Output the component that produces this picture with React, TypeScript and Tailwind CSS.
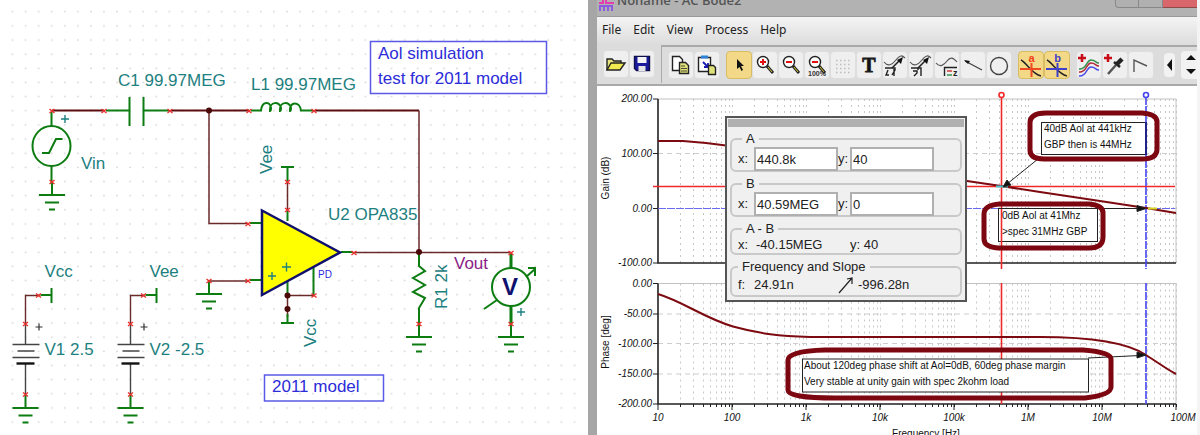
import type { ReactNode } from "react";

interface Point {
  x: number;
  y: number;
}

interface ToolButtonProps {
  label: string;
  active?: boolean;
  children: ReactNode;
}

const MENU = ["File", "Edit", "View", "Process", "Help"];

/* ---------- Schematic ---------- */

function Pin({ x, y }: Point) {
  return <path d={`M${x - 2.5} ${y - 2}l5 4m0 -4l-5 4`} stroke="#e8302c" strokeWidth="1.4" />;
}

function Node({ x, y }: Point) {
  return <circle cx={x} cy={y} r="3" fill="#4a0808" />;
}

function Ground({ x, y }: Point) {
  return (
    <g stroke="#0d7d12" strokeWidth="2">
      <path d={`M${x} ${y - 13}v13M${x - 13} ${y}h26`} />
      <path d={`M${x - 7} ${y + 7.5}h14M${x - 3} ${y + 14.5}h6`} />
    </g>
  );
}

function Battery({ x, supply, value }: { x: number; supply: string; value: string }) {
  return (
    <g fill="none">
      <path d={`M${x} 324V295.5h14`} stroke="#6b2a2a" strokeWidth="1.4" />
      <path d={`M${x + 15} 295h11M${x + 26} 288v15`} stroke="#0d7d12" strokeWidth="2" />
      <path d={`M${x} 325v19M${x} 364v31`} stroke="#444" strokeWidth="1.4" />
      <path d={`M${x - 13} 344.5h27M${x - 8} 351h17M${x - 13} 357.5h27`} stroke="#444" strokeWidth="1.3" />
      <path d={`M${x - 9} 363.5h18`} stroke="#111" strokeWidth="2.4" />
      <path d={`M${x + 10} 327h7m-3.5 -3.5v7`} stroke="#333" strokeWidth="1.2" />
      <Ground x={x} y={408} />
      <Pin x={x + 13} y={295.5} />
      <Pin x={x} y={324} />
      <Pin x={x} y={394.5} />
      <g fill="#1d8080">
        <text x={x + 19} y="277">{supply}</text>
        <text x={x + 19} y="355">{value}</text>
      </g>
    </g>
  );
}

function Schematic() {
  return (
    <svg viewBox="0 0 588 435" className="block w-full font-['Liberation_Sans',sans-serif] text-[17px]">
      <defs>
        <pattern id="dots" width="13.07" height="14.15" patternUnits="userSpaceOnUse" x="6" y="4.7">
          <circle cx="6.5" cy="7" r="0.9" fill="#d6d6d6" />
        </pattern>
      </defs>
      <rect x="6" y="4.7" width="575" height="424" fill="url(#dots)" />

      {/* Wires */}
      <g fill="none" stroke="#5c0d10" strokeWidth="2">
        <path d="M52 110.5h52M171 110.5h78M315 110.5h104" />
        <path d="M209 110.5V223.5h39M419 110.5V252M354 252.5h157M287.5 183v27M209 281h39M287.5 295.5h26M287.5 295v22" stroke="#6b2a2a" strokeWidth="1.5" />
      </g>

      {/* Component bodies */}
      <g fill="none" stroke="#0d7d12" strokeWidth="2">
        <path d="M51.5 112v14M51.5 166v18M42 153h7l7 -14h6.5" />
        <ellipse cx="51.5" cy="146" rx="19" ry="20" />
        <path d="M106 110.5h24M129.5 97v29M143.5 97v29M143 110.5h26" />
        <path d="M251 110.5h10C262 101 270 101 271 108q0 3 -1 3C269 101 280 101 281 108q0 3 -1 3C279 101 290 101 291 108q0 3 -1 3C289 101 300 101 301 110.5h12" />
        <path d="M250 223h12M250 280h12M341 252h12M281 167h13M287.5 167v15M287.5 211v10" />
        <path d="M287.5 280v15M313.5 267v28M281 323h13M287.5 314v9" />
        <path d="M419 254v12l6 5l-12 7l12 7l-12 7l12 6l-6 10v16" />
        <circle cx="511" cy="287" r="19" />
        <path d="M511 254v14M511 306v18" strokeWidth="3" />
        <path d="M484 309l13 -9M526 277l9 -8M528 268h7v8" />
      </g>

      <path d="M262 210.5L340 252.5L262 295Z" fill="#ffff00" stroke="#10106e" strokeWidth="2.5" />
      <g stroke="#1d8080" strokeWidth="1.4">
        <path d="M268 276h8m-4 -4v8M282 267h9m-4.5 -4.5v9M61 119h8m-4 -4v8M517 312h8m-4 -4v8" />
      </g>

      <Ground x={52} y={195} />
      <Ground x={209} y={294} />
      <Ground x={419} y={337} />
      <Ground x={511} y={337} />

      <Node x={209} y={110.5} />
      <Node x={419} y={252} />
      <Node x={287.5} y={295.5} />
      <Node x={287.5} y={309} />

      <Pin x={52} y={111} />
      <Pin x={104} y={111} />
      <Pin x={170} y={111} />
      <Pin x={249} y={111} />
      <Pin x={314} y={111} />
      <Pin x={248} y={224} />
      <Pin x={248} y={281} />
      <Pin x={209} y={281} />
      <Pin x={52} y={182} />
      <Pin x={287.5} y={182} />
      <Pin x={287.5} y={210} />
      <Pin x={314} y={295.5} />
      <Pin x={354} y={253} />
      <Pin x={511} y={253} />
      <Pin x={511} y={324} />
      <Pin x={419} y={324} />

      <Battery x={25.5} supply="Vcc" value="V1 2.5" />
      <Battery x={130.5} supply="Vee" value="V2 -2.5" />

      <g fill="#1d8080">
        <text x="118" y="86">C1 99.97MEG</text>
        <text x="251" y="90">L1 99.97MEG</text>
        <text x="81" y="169">Vin</text>
        <text x="328" y="220">U2 OPA835</text>
        <text transform="translate(272 174) rotate(-90)">Vee</text>
        <text transform="translate(316 347) rotate(-90)">Vcc</text>
        <text transform="translate(447 309) rotate(-90)">R1 2k</text>
      </g>
      <text x="454" y="269" fill="#8a1c86">Vout</text>
      <text x="510" y="295" textAnchor="middle" fill="#10106e" className="text-[24px] font-bold">V</text>
      <text x="318" y="278" fill="#2a2ae0" className="text-[10px]">PD</text>

      {/* Notes */}
      <g fill="none" stroke="#5a5ae6" strokeWidth="1.5">
        <rect x="370.5" y="41.5" width="176" height="52" />
        <rect x="264.5" y="375" width="119" height="26" />
      </g>
      <g fill="#2c2cd8">
        <text x="378" y="59">Aol simulation</text>
        <text x="378" y="84">test for 2011 model</text>
        <text x="272" y="392">2011 model</text>
      </g>
    </svg>
  );
}

/* ---------- Toolbar ---------- */

function ToolButton({ label, active = false, children }: ToolButtonProps) {
  return (
    <button
      type="button"
      aria-label={label}
      className={`h-7 w-[26px] shrink-0 rounded-sm border ${active ? "border-[#d8bd62] bg-[#f3d987]" : "border-[#dedede] bg-[#efefef]"}`}
    >
      <svg viewBox="0 0 24 26" className="block h-full w-full" fill="none" stroke="#222" strokeWidth="1.4">
        {children}
      </svg>
    </button>
  );
}

function Lens({ plus = false }: { plus?: boolean }) {
  return (
    <>
      <circle cx="10" cy="10" r="5.5" fill="#fff" />
      <path d="M14 14l6 7" strokeWidth="3" />
      <path d="M15 15l4 5" stroke="#d8cf3a" strokeWidth="1" />
      <path d={plus ? "M7 10h6M10 7v6" : "M7 10h6"} stroke="#e01010" strokeWidth="2" />
    </>
  );
}

/* Wavy trace with an arrow, shared by the two marker tools */
function MarkedTrace() {
  return (
    <>
      <path d="M1 10c4 5 8 3 12 -2s6 -5 9 -2" stroke="#555" strokeWidth="1.2" />
      <path d="M9 16L17 8" strokeWidth="1.6" />
      <path d="M20 5l-6 3l4 4z" fill="#111" stroke="none" />
    </>
  );
}

function Toolbar() {
  return (
    <div className="flex h-[43px] items-center overflow-hidden border-b-2 border-[#a9a9a9] bg-[#dcdcdc] font-['Liberation_Sans',sans-serif]">
      <div className="flex shrink-0 items-center px-1.5">
        <ToolButton label="Open">
          <path d="M3 19V8h5l2 2h7v3" fill="#e8e27a" />
          <path d="M3 19l4 -7h14l-5 7z" fill="#f0ea50" />
        </ToolButton>
        <ToolButton label="Save">
          <path d="M4.5 5.5h15v14h-13l-2 -2z" fill="#1a1a9c" stroke="#101050" />
          <path d="M7.5 6h9v6h-9z" fill="#f4f4f4" stroke="none" />
          <path d="M8.5 15h7v5h-7z" fill="#e4e4e4" stroke="none" />
        </ToolButton>
      </div>
      <div className="flex h-[38px] min-w-0 grow items-center gap-1.5 border-t-2 border-l border-[#a9a9a9] pl-1.5">
        <div className="flex shrink-0">
          <ToolButton label="Copy">
            <path d="M3.5 4.5h7l3 3v11h-10z" fill="#fff" />
            <path d="M10.5 10.5h6l3 3v8h-9z" fill="#dfe27a" />
            <path d="M12 14h4M12 16.5h6M12 19h6" strokeWidth="0.8" />
          </ToolButton>
          <ToolButton label="Paste">
            <path d="M3.5 5.5h12v14h-12z" fill="#fff" />
            <path d="M6 5h7" stroke="#2c83d8" strokeWidth="3" />
            <path d="M8 10l5 5m0 -4v4h-4" stroke="#1a1ab0" strokeWidth="1.8" />
            <path d="M13.5 13.5h5l2 2v7h-7z" fill="#dfe27a" />
          </ToolButton>
        </div>
        <div className="flex shrink-0">
          <ToolButton label="Select" active>
            <path d="M10 7v10l2.5 -2l2 4l1.5 -1l-2 -4h3z" fill="#111" stroke="none" />
          </ToolButton>
          <ToolButton label="Zoom in"><Lens plus /></ToolButton>
          <ToolButton label="Zoom out"><Lens /></ToolButton>
          <ToolButton label="Zoom 100%">
            <Lens />
            <text x="3" y="24" fill="#333" stroke="none" className="text-[7px] font-bold">100%</text>
          </ToolButton>
          <ToolButton label="Grid">
            <path d="M5 8.5h14M5 12.5h14M5 16.5h14M5 20.5h14" stroke="#bdbdbd" strokeDasharray="1.5 2.5" />
          </ToolButton>
          <ToolButton label="Text">
            <text x="12" y="20" textAnchor="middle" fill="#111" strokeWidth="0.8" className="font-['Liberation_Serif',serif] text-[20px] font-bold">T</text>
          </ToolButton>
          <ToolButton label="Marker">
            <MarkedTrace />
            <path d="M2 16h10v2l-3 5M5 18l-2 5h3M11 17v7" />
          </ToolButton>
          <ToolButton label="Curve label">
            <MarkedTrace />
            <path d="M2 16h10v8M4 19h4v2l-3 3M9 16v2" />
          </ToolButton>
          <ToolButton label="Legend">
            <path d="M1 11c4 5 8 2 11 -2s6 -4 10 1" stroke="#555" strokeWidth="1.2" />
            <path d="M9.5 15v9M9 15.5h13" />
            <path d="M12 19h5" stroke="#c83030" />
            <path d="M12 23h5" stroke="#289048" />
            <text x="18" y="24" fill="#222" stroke="none" className="text-[9px] font-bold">z</text>
          </ToolButton>
          <ToolButton label="Line">
            <path d="M4 9l17 9" stroke="#444" />
            <path d="M3 8l6 1l-2 3z" fill="#111" stroke="none" />
          </ToolButton>
          <ToolButton label="Circle"><circle cx="12" cy="14" r="8.5" stroke="#444" /></ToolButton>
        </div>
        <div className="flex shrink-0">
          <ToolButton label="Cursor a" active>
            <path d="M2 8c6 3 11 14 20 16" />
            <path d="M1 17h21M12.5 11v14" stroke="#f04a20" strokeWidth="2" />
            <text x="12.5" y="10" textAnchor="middle" fill="#f03c18" stroke="none" className="text-[11px] font-bold">a</text>
          </ToolButton>
          <ToolButton label="Cursor b" active>
            <path d="M2 8c6 3 11 14 20 16" />
            <path d="M1 17h21M12.5 11v14" stroke="#4040c8" strokeWidth="2" />
            <text x="12.5" y="10" textAnchor="middle" fill="#4040c8" stroke="none" className="text-[11px] font-bold">b</text>
          </ToolButton>
        </div>
        <div className="flex shrink-0">
          <ToolButton label="Add curves">
            <path d="M1 6h8M5 2v8" stroke="#c80c18" strokeWidth="2.5" />
            <path d="M2 17c8 1 7 -9 12 -9s4 3 8 3" stroke="#31904a" />
            <path d="M2 20c8 1 7 -9 12 -9s4 3 8 3" stroke="#b02838" />
            <path d="M2 24c8 1 7 -9 12 -9s4 3 8 3" stroke="#4a4ae8" />
          </ToolButton>
          <ToolButton label="Pick curve">
            <path d="M1 6h8M5 2v8" stroke="#c80c18" strokeWidth="2.5" />
            <path d="M5 22l8 -9" stroke="#555" strokeWidth="2.5" />
            <path d="M11 10l6 5" strokeWidth="2.5" />
            <path d="M14 12l5 -5" strokeWidth="4.5" />
          </ToolButton>
          <ToolButton label="Angle"><path d="M5 20V8l13 6" stroke="#555" /></ToolButton>
        </div>
        <button type="button" aria-label="Scroll left" className="ml-1 h-6 w-[11px] shrink-0 rounded-sm bg-[#f2f2f2]">
          <svg viewBox="0 0 11 24" className="block h-full w-full"><path d="M8 6v12l-5 -6z" fill="#111" /></svg>
        </button>
        <button type="button" aria-label="More tools" className="h-7 w-5 shrink-0 rounded-sm bg-[#f2f2f2]">
          <svg viewBox="0 0 20 28" className="block h-full w-full"><path d="M5 9h10l-5 -5zM5 18h10l-5 5z" fill="#111" /></svg>
        </button>
      </div>
    </div>
  );
}

/* ---------- Bode plot ---------- */

const DECADES = ["10", "100", "1k", "10k", "100k", "1M", "10M", "100M"];
const GAIN_TICKS = [
  { label: "200.00", y: 99 },
  { label: "100.00", y: 153.5 },
  { label: "0.00", y: 208.5 },
  { label: "-100.00", y: 263 },
];
const PHASE_TICKS = [
  { label: "0.00", y: 283.5 },
  { label: "-50.00", y: 314 },
  { label: "-100.00", y: 343.5 },
  { label: "-150.00", y: 374 },
  { label: "-200.00", y: 404 },
];
const X0 = 658;
const DECADE = 74;

const gridX = DECADES.slice(0, 7).flatMap((_, d) =>
  [2, 3, 4, 5, 6, 7, 8, 9, 10].map((n) => Math.round(X0 + DECADE * (d + Math.log10(n))) + 0.5)
);

function Panel({ ticks }: { ticks: { label: string; y: number }[] }) {
  const top = ticks[0].y;
  const bottom = ticks[ticks.length - 1].y;
  return (
    <g>
      <path d={gridX.map((x) => `M${x} ${top}V${bottom}`).join("")} stroke="#c8c8c8" strokeDasharray="2 4" />
      <path d={ticks.slice(1, -1).map((t) => `M${X0} ${t.y}H1176`).join("")} stroke="#cdcdcd" strokeDasharray="5 4" />
      <path d={`M${X0} ${top}H1176V${bottom}`} fill="none" stroke="#c2c2c2" />
      <path d={`M${X0} ${top}V${bottom}H1176`} fill="none" stroke="#222" strokeWidth="1.6" />
      {ticks.map((t) => (
        <g key={t.label}>
          <path d={`M653 ${t.y}h5`} stroke="#222" />
          <text x="652" y={t.y + 3} textAnchor="end" className="italic">{t.label}</text>
        </g>
      ))}
    </g>
  );
}

function BodePlot() {
  return (
    <svg viewBox="597 86 600 349" className="block w-full bg-white font-['Liberation_Sans',sans-serif] text-[10px]" fill="#111">
      <Panel ticks={GAIN_TICKS} />
      <Panel ticks={PHASE_TICKS} />
      <path d={gridX.map((x) => `M${x} 404v3`).join("")} stroke="#222" />
      {DECADES.map((label, i) => (
        <g key={label}>
          <path d={`M${X0 + i * DECADE} 404v6`} stroke="#222" />
          <text x={X0 + i * DECADE + (i === 7 ? 7 : 0)} y="421" textAnchor="middle" className="italic">{label}</text>
        </g>
      ))}
      <text transform="translate(609 178) rotate(-90)" textAnchor="middle">Gain (dB)</text>
      <text transform="translate(609 342) rotate(-90)" textAnchor="middle">Phase [deg]</text>
      <text x="926" y="437" textAnchor="middle">Frequency [Hz]</text>

      {/* Cursors */}
      <g fill="none" strokeWidth="1.6">
        <path d="M653 186.5H1175M1001.5 97V269M1001.5 283V404" stroke="#f02828" />
        <circle cx="1001.5" cy="95" r="2.5" stroke="#f02828" />
        <path d="M658 208.5H1175" stroke="#6a6af0" strokeWidth="1.2" strokeDasharray="8 1" />
        <path d="M1146 97V269M1146 283V404" stroke="#4444f0" strokeDasharray="8 1" />
        <circle cx="1146" cy="95" r="2.5" stroke="#4444f0" />
      </g>

      {/* Traces */}
      <g fill="none" stroke="#7c0a10" strokeWidth="2">
        <path d="M658 141H683L706 143L726 145.5L800 155L967 181L1001 186L1040 192L1100 201L1146 208L1176 213" />
        <path d="M658 294C684 302 704 318 733 326.5C760 334 780 336 810 337H1040C1080 337 1125 341 1146 355C1160 364 1168 370 1176 374" />
        <path d="M996 186.5h12" stroke="#4cc8d0" />
        <path d="M1148 208.5h9" stroke="#d8d828" />
      </g>

      {/* Callouts */}
      <g stroke="#222" fill="none">
        <path d="M1038 159L1007 184M1098 208.5H1140M1088 358L1140 355.5" />
        <path d="M1003 187l8 -2l-4 -5zM1146 208.5l-9 -3v6zM1146 355l-9 -3v6z" fill="#111" />
        <rect x="1041.5" y="122.5" width="104" height="32" fill="#fff" />
        <rect x="998.5" y="208.5" width="99" height="33" fill="#fff" />
        <rect x="802.5" y="359" width="286" height="33" fill="#fff" />
      </g>
      <path d="M1001.5 209V242" stroke="#f02828" strokeWidth="1.6" />
      <path d="M1146 122V155" stroke="#222288" strokeWidth="2" />
      <g fill="none" stroke="#7d0710" strokeWidth="5">
        <path d="M1046 113H1142Q1157 114 1157 122V149Q1157 159 1142 159H1044Q1030 159 1030 150V123Q1030 113 1046 113Z" />
        <path d="M1000 204H1089Q1103 205 1103 213V237Q1103 248 1089 248H998Q984 247 984 239V214Q984 205 1000 204Z" />
        <path d="M825 350H1083Q1111 352 1111 359V387Q1111 395 1085 398H835Q788 398 788 390V360Q788 351 825 350Z" />
      </g>
      <g>
        <text x="1044" y="132">40dB Aol at 441kHz</text>
        <text x="1044" y="148">GBP then is 44MHz</text>
        <text x="1002" y="219">0dB Aol at 41Mhz</text>
        <text x="1002" y="235">&gt;spec 31MHz GBP</text>
        <text x="804" y="369">About 120deg phase shift at Aol=0dB, 60deg phase margin</text>
        <text x="804" y="385">Very stable at unity gain with spec 2kohm load</text>
      </g>
    </svg>
  );
}

/* ---------- Cursor read-out ---------- */

function CursorFields({ name, x, y }: { name: string; x: string; y: string }) {
  return (
    <fieldset className="h-[41px] rounded-md border-2 border-[#c9c9c9] pl-1.5">
      <legend className="ml-1 px-1 leading-4">{name}</legend>
      <div className="flex h-6 items-center">
        <label htmlFor={`${name}-x`} className="w-4">x:</label>
        <input id={`${name}-x`} defaultValue={x} className="h-6 w-[84px] border-2 border-[#b0b0b0] bg-white px-px" />
        <label htmlFor={`${name}-y`} className="w-3">y:</label>
        <input id={`${name}-y`} defaultValue={y} className="h-6 w-[84px] border-2 border-[#b0b0b0] bg-white px-px" />
      </div>
    </fieldset>
  );
}

function CursorDialog() {
  return (
    <div className="absolute top-[30px] left-[128px] w-[242px] border-2 border-[#555] bg-[#f0f0f0] p-px font-['Liberation_Sans',sans-serif] text-[13px] text-[#222]">
      <div className="h-2 bg-[#b0b0b0]" />
      <div className="flex flex-col gap-1 px-0.5 pt-1 pb-0.5">
        <CursorFields name="A" x="440.8k" y="40" />
        <CursorFields name="B" x="40.59MEG" y="0" />
        <fieldset className="h-[34px] rounded-md border-2 border-[#c9c9c9] pl-1.5">
          <legend className="ml-1 px-1 leading-4">A - B</legend>
          <div className="flex h-4 items-center">
            <span className="w-[18px]">x:</span>
            <span className="w-[94px]">-40.15MEG</span>
            <span>y: 40</span>
          </div>
        </fieldset>
        <fieldset className="h-[38px] rounded-md border-2 border-[#c9c9c9] pl-1.5">
          <legend className="px-1 leading-4">Frequency and Slope</legend>
          <div className="flex h-5 items-center">
            <span className="w-4">f:</span>
            <span className="w-[84px]">24.91n</span>
            <svg viewBox="0 0 16 18" className="mr-1 h-[18px] w-4" fill="none" stroke="#222" strokeWidth="1.2">
              <path d="M1 17L14 2M9 3l5 -1v6" />
            </svg>
            <span>-996.28n</span>
          </div>
        </fieldset>
      </div>
    </div>
  );
}

function BodeWindow() {
  return (
    <div className="flex h-full flex-col border-r-[3px] border-l-[9px] border-r-[#f4f4f4] border-l-[#a6a6a6]">
      <header className="flex h-[17px] items-start justify-between overflow-hidden border-b border-[#999] bg-[#b2b2b2]">
        <div className="flex">
          <svg viewBox="0 0 20 12" className="h-3 w-5" fill="none" strokeWidth="2">
            <path d="M2 3h4v-3M9 0v3h8" stroke="#e23cae" />
            <path d="M3 11V6h4v5M7 6h4v5M11 6h4v5" stroke="#8a5ae0" />
          </svg>
          <h1 className="-mt-2 font-['Open_Sans',sans-serif] text-[13px] leading-4 font-semibold text-[#555]">Noname - AC Bode2</h1>
        </div>
        <div className="flex">
          <button type="button" aria-label="Minimize" className="h-2 w-6 rounded-bl border border-t-0 border-[#888] bg-[#b0b0b0]" />
          <button type="button" aria-label="Maximize" className="h-2 w-6 border border-t-0 border-l-0 border-[#888] bg-[#b0b0b0]" />
          <button type="button" aria-label="Close" className="h-2 w-[34px] border-b border-[#8f4a4a] bg-[#d9666a]" />
        </div>
      </header>
      <nav className="flex h-[26px] items-center gap-3 bg-linear-to-b from-[#f4f4f4] to-[#dedede] px-[5px] font-['Noto_Sans',sans-serif] text-[12px] text-[#222]">
        {MENU.map((item) => (
          <button key={item} type="button">{item}</button>
        ))}
      </nav>
      <Toolbar />
      <div className="relative grow bg-white">
        <BodePlot />
        <CursorDialog />
      </div>
    </div>
  );
}

export default function App() {
  return (
    <main className="flex h-screen overflow-hidden bg-white">
      <section className="w-[49%] shrink-0">
        <Schematic />
      </section>
      <section className="w-[51%] shrink-0">
        <BodeWindow />
      </section>
    </main>
  );
}
